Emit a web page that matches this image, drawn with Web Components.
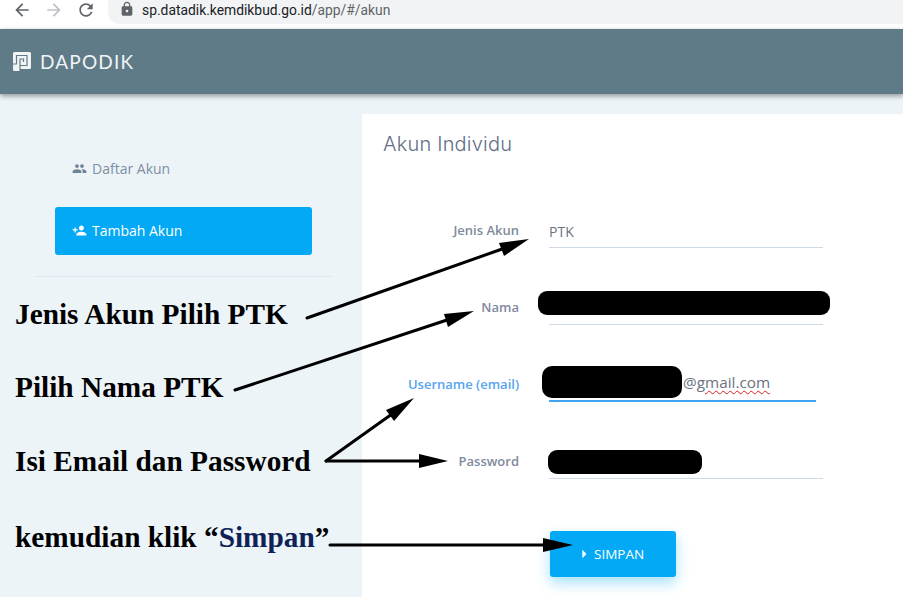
<!DOCTYPE html>
<html><head><meta charset="utf-8"><title>Dapodik</title>
<style>
html,body{margin:0;padding:0;background:#fff;}
body{width:903px;height:597px;overflow:hidden;position:relative;font-family:"Open Sans",sans-serif;}
</style></head>
<body>
<browser-bar url-main="sp.datadik.kemdikbud.go.id" url-rest="/app/#/akun"></browser-bar>
<app-header>DAPODIK</app-header>
<app-main>
  <side-nav slot="side">
    <nav-item icon="people">Daftar Akun</nav-item>
    <nav-item icon="add" active>Tambah Akun</nav-item>
  </side-nav>
  <account-form slot="content" title="Akun Individu">
    <form-row label="Jenis Akun">PTK</form-row>
    <form-row label="Nama"></form-row>
    <form-row label="Username (email)" focused><span style="display:block;padding-left:134px;font-size:15.3px;line-height:24px">@<span style="text-decoration:underline wavy #e01b1b 1px;text-underline-offset:2px">gmail.com</span></span></form-row>
    <form-row label="Password"></form-row>
    <action-button>SIMPAN</action-button>
  </account-form>
</app-main>
<note-layer>
  <note-text x="15" y="314" size="30">Jenis Akun Pilih PTK</note-text>
  <note-text x="15" y="387" size="30">Pilih Nama PTK</note-text>
  <note-text x="15" y="461" size="30">Isi Email dan Password</note-text>
  <note-text x="15" y="537" size="30">kemudian klik “<span style="color:#0f2257">Simpan</span>”</note-text>
</note-layer>
<script>
const P={
 back:'M20 11H7.83l5.59-5.59L12 4l-8 8 8 8 1.41-1.41L7.83 13H20v-2z',
 fwd:'M12 4l-1.41 1.41L16.17 11H4v2h12.17l-5.58 5.59L12 20l8-8z',
 refresh:'M17.65 6.35C16.2 4.9 14.21 4 12 4c-4.42 0-7.99 3.58-7.99 8s3.57 8 7.99 8c3.73 0 6.84-2.55 7.73-6h-2.08c-.82 2.33-3.04 4-5.65 4-3.31 0-6-2.69-6-6s2.69-6 6-6c1.66 0 3.14.69 4.22 1.78L13 11h7V4l-2.35 2.35z',
 lock:'M18 8h-1V6c0-2.76-2.24-5-5-5S7 3.24 7 6v2H6c-1.1 0-2 .9-2 2v10c0 1.1.9 2 2 2h12c1.1 0 2-.9 2-2V10c0-1.1-.9-2-2-2zm-6 9c-1.1 0-2-.9-2-2s.9-2 2-2 2 .9 2 2-.9 2-2 2zm3.1-9H8.9V6c0-1.71 1.39-3.1 3.1-3.1 1.71 0 3.1 1.39 3.1 3.1v2z',
 people:'M16 11c1.66 0 2.99-1.34 2.99-3S17.66 5 16 5c-1.66 0-3 1.34-3 3s1.34 3 3 3zm-8 0c1.66 0 2.99-1.34 2.99-3S9.66 5 8 5C6.34 5 5 6.34 5 8s1.34 3 3 3zm0 2c-2.33 0-7 1.17-7 3.5V19h14v-2.5c0-2.33-4.67-3.5-7-3.5zm8 0c-.29 0-.62.02-.97.05 1.16.84 1.97 1.97 1.97 3.45V19h6v-2.5c0-2.33-4.67-3.5-7-3.5z',
 add:'M15 12c2.21 0 4-1.79 4-4s-1.79-4-4-4-4 1.79-4 4 1.79 4 4 4zm-9-2V7H4v3H1v2h3v3h2v-3h3v-2H6zm9 4c-2.67 0-8 1.34-8 4v2h16v-2c0-2.66-5.33-4-8-4z',
 right:'M10 17l5-5-5-5v10z'
};
const svg=(n,s,c)=>`<svg width="${s}" height="${s}" viewBox="0 0 24 24" fill="${c}" aria-hidden="true"><path d="${P[n]}"/></svg>`;
class Base extends HTMLElement{
  render(html){this.attachShadow({mode:'open'}).innerHTML=html;}
}
customElements.define('browser-bar',class extends Base{connectedCallback(){
 this.render(`<style>
 :host{display:flex;height:29px;box-sizing:border-box;background:#fff;align-items:flex-start;overflow:hidden}
 .ic{display:flex;width:24px;height:20px;align-items:center;justify-content:center}
 .nav{display:flex;gap:8px;padding:0 0 0 10px;height:20px}
 .pill{margin-left:10px;flex:1;height:24px;background:#f1f3f4;border-radius:0 0 0 12px;display:flex;align-items:flex-start;padding:0 0 0 11px;font:13.85px/20px Roboto,sans-serif;color:#202124}
 .pill svg{margin:1px 7px 0 0;flex:none}
 .r{color:#5f6368}
 </style>
 <div class="nav"><span class="ic">${svg('back',20,'#5f6368')}</span><span class="ic">${svg('fwd',20,'#bdc1c6')}</span><span class="ic">${svg('refresh',20,'#5f6368')}</span></div>
 <div class="pill">${svg('lock',16,'#5f6368')}<span>${this.getAttribute('url-main')}<span class="r">${this.getAttribute('url-rest')}</span></span></div>`);
}});
customElements.define('app-header',class extends Base{connectedCallback(){
 this.render(`<style>
 :host{display:flex;position:relative;z-index:2;height:65px;background:#607b88;align-items:center;padding-left:13px;gap:9px;box-shadow:0 2px 5px rgba(0,0,0,.4);color:#f1f4f5;font:400 19px Lato,sans-serif;letter-spacing:1.2px}
 svg{flex:none}
 </style>
 <svg width="18" height="19" viewBox="0 0 18 19"><path fill="#f1f4f5" d="M1.500 0h15A1.500 1.500 0 0 1 18 1.500v14a1.500 1.500 0 0 1-1.500 1.500H7v2H1.500A1.500 1.500 0 0 1 0 17.500v-16A1.500 1.500 0 0 1 1.500 0z"/><path fill="none" stroke="#607b88" stroke-width="1.200" d="M0 12h3.500V3.500h10.500V13.500H7V19M7 13.500V7h3.500v3"/></svg>
 <slot></slot>`);
}});
customElements.define('app-main',class extends Base{connectedCallback(){
 this.render(`<style>
 :host{display:flex;height:503px;background:#ecf4f8;padding-top:20px;box-sizing:border-box}
 .s{width:362px;flex:none}.c{flex:1;background:#fff}
 </style><div class="s"><slot name="side"></slot></div><div class="c"><slot name="content"></slot></div>`);
}});
customElements.define('side-nav',class extends Base{connectedCallback(){
 this.render(`<style>
 :host{display:block;padding:31px 30px 0 35px}
 .l{margin:0 0 0 20px;display:flex;flex-direction:column;gap:14px;width:257px}
 hr{border:0;border-top:1px solid #dfe7f2;margin:21px 0 0;width:297px}
 </style><div class="l"><slot></slot></div><hr>`);
}});
customElements.define('nav-item',class extends Base{connectedCallback(){
 const a=this.hasAttribute('active');
 this.render(`<style>
 :host{display:flex;height:48px;align-items:center;gap:5px;padding-left:17px;padding-bottom:2px;border-radius:3px;box-sizing:border-box;
 font:${a?500:400} 14px "Open Sans",sans-serif;color:${a?'#fff':'#7d8fa3'};background:${a?'#03a9f4':'transparent'}}
 svg{flex:none}
 </style>${svg(this.getAttribute('icon'),15,a?'#fff':'#6d8393')}<slot></slot>`);
}});
customElements.define('account-form',class extends Base{connectedCallback(){
 this.render(`<style>
 :host{display:block;padding:18px 0 0 21px}
 h2{margin:0;font:300 20px/24px Inter,sans-serif;letter-spacing:.2px;color:#5e6e85;height:84px}
 .f{margin-left:-21px}
 </style><h2>${this.getAttribute('title')}</h2><div class="f"><slot></slot></div>`);
}});
customElements.define('form-row',class extends Base{connectedCallback(){
 const f=this.hasAttribute('focused');
 this.render(`<style>
 :host{display:grid;grid-template-columns:157px 274px;column-gap:30px;margin-bottom:45px;height:32px}
 label{text-align:right;font:600 13px/29px "Open Sans",sans-serif;color:${f?'#55a5ef':'#808a9c'}}
 .i{box-sizing:border-box;height:32px;width:${f?267:274}px;border-bottom:${f?'2px solid #42a5f0':'1px solid #d0d9e6'};font:14px/31px "Open Sans",sans-serif;color:#6b7280}
 </style><label>${this.getAttribute('label')}</label><div class="i"><slot></slot></div>`);
}});
customElements.define('action-button',class extends Base{connectedCallback(){
 this.render(`<style>
 :host{display:flex;width:126px;height:46px;margin:52px 0 0 188px;background:#03a9f4;border-radius:3px;color:#fff;align-items:center;padding-left:24px;box-sizing:border-box;font:500 13.5px "Open Sans",sans-serif;box-shadow:0 6px 14px rgba(3,169,244,.35)}
 svg{flex:none}
 </style>${svg('right',20,'#fff')}<slot></slot>`);
}});
customElements.define('note-layer',class extends Base{connectedCallback(){
 const line=(a,b,c,d)=>`<line x1="${a}" y1="${b}" x2="${c}" y2="${d}"/>`;
 const head=(p)=>`<polygon points="${p}" fill="#000" stroke="none"/>`;
 this.render(`<style>
 :host{position:absolute;inset:0;z-index:5;display:block;pointer-events:none}
 svg{position:absolute;left:0;top:0}
 </style>
 <svg width="903" height="597" viewBox="0 0 903 597"><g stroke="#000" stroke-width="3" stroke-linecap="round">
 ${line(307,318,505,248)}${head('529,239 499,243 504,256')}
 ${line(235,390,450,319)}${head('474,311 444,314 448,327')}
 ${line(326,461,392,414)}${head('414,398 386,410 394,421')}
 ${line(326,461,425,461)}${head('448,461 419,454 419,468')}
 ${line(330,545,550,545)}${head('573,545 543,538 543,552')}
 </g>
 <rect x="538" y="291" width="292" height="24" rx="9"/>
 <rect x="542" y="366" width="140" height="32" rx="10"/>
 <rect x="548" y="450" width="154" height="24" rx="9"/>
 </svg><slot></slot>`);
}});
customElements.define('note-text',class extends Base{connectedCallback(){
 this.render(`<style>
 :host{position:absolute;left:${this.getAttribute('x')}px;top:${this.getAttribute('y')}px;transform:translateY(-50%) scaleX(.977);transform-origin:left center;white-space:nowrap;
 font:700 ${this.getAttribute('size')}px/1 "Liberation Serif",serif;color:#000}
 </style><slot></slot>`);
}});
</script>
</body></html>
